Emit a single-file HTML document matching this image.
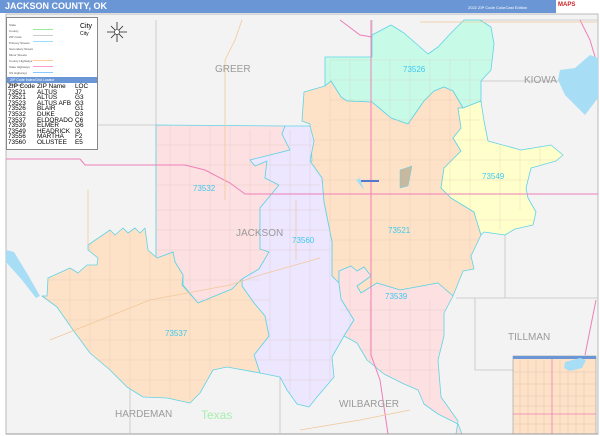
<!DOCTYPE html>
<html><head><meta charset="utf-8"><style>
html,body{margin:0;padding:0;width:600px;height:436px;overflow:hidden;background:#fff;font-family:"Liberation Sans",sans-serif}
#hdr{position:absolute;left:0;top:0;width:600px;height:13px;background:#6a96d6}
#hdr b{position:absolute;left:5px;top:1px;color:#fff;font-size:9px}
#hdr i{position:absolute;left:468px;top:5px;color:#fff;font-size:4px;font-style:normal}
#logo{position:absolute;left:556px;top:0;width:44px;height:13px;background:#fff}
svg{position:absolute;left:0;top:0}
#leg{position:absolute;left:6px;top:17px;width:92px;height:133px;background:#fff;border:1px solid #888;box-sizing:border-box;font-size:6.4px;line-height:5.6px;color:#000}
#leg .bar{position:absolute;left:0;top:59px;width:90px;height:6px;background:#6a96d6;color:#fff;font-size:3.5px;line-height:6px;padding-left:3px;box-sizing:border-box}
#leg .t{position:absolute;left:1px;top:66px}
#leg .t div{height:5.6px;line-height:6px;white-space:nowrap}
#leg .t span{display:inline-block;vertical-align:top}
.a{width:29px}.b{width:38px}
.lab{position:absolute;color:#9a9a9a;font-size:10px}
.zip{position:absolute;color:#3ec8ee;font-size:8px}
</style></head><body>
<svg width="600" height="436" viewBox="0 0 600 436">
<defs>
<clipPath id="zc">
<path d="M325 57 H372 V35 L391 25 L404 33 L428 54 L438 47 L451 33 L464 20 L480 20 L491 27 L494 44 L491 70 L481 81 L481 101 L484 121 L488 141 L521 150 L551 145 L563 155 L556 161 L531 168 L526 188 L528 198 L536 212 L533 225 L515 229 L505 235 L484 232 L481 235 L471 256 L474 269 L463 271 L453 296 L444 313 L444 336 L438 360 L441 397 L458 421 L456 434 L438 414 L424 404 L418 390 L404 384 L384 374 L367 360 L357 343 L344 336 L332 357 L334 377 L317 397 L309 407 L297 404 L287 390 L280 377 L260 373 L227 367 L213 370 L200 393 L190 403 L167 398 L143 397 L127 387 L110 370 L90 353 L73 330 L57 307 L42 296 L48 278 L70 268 L78 273 L87 265 L97 265 L98 258 L88 250 L88 245 L110 230 L115 235 L123 228 L128 233 L135 228 L140 233 L145 228 L148 250 L156 258 L156 125 L310 126 L302 121 L304 92 L325 86 Z"/>
</clipPath>
</defs>
<rect x="0" y="0" width="600" height="436" fill="#fff"/>
<rect x="6" y="14" width="592" height="420" fill="#f3f3f3" stroke="#bbb" stroke-width="1"/>
<g fill="none" stroke="#c4c4c4" stroke-width="0.8">
<path d="M6 125 H156 V296 M156 125 V20 M372 20 V57 M464 20 H598 M481 81 H598 M505 235 V298 H598 M456 298 H505 M475 298 V370 H513 M130 433 V365 H150 M280 433 V373"/>
</g>
<g stroke="#5fd3e6" stroke-width="0.8" stroke-linejoin="round">
<path fill="#c7fbe8" d="M325 57 H372 V35 L391 25 L404 33 L428 54 L438 47 L451 33 L464 20 L480 20 L491 27 L494 44 L491 70 L481 81 L481 101 L463 108 L453 91 L444 87 L434 91 L424 101 L408 124 L391 118 L372 102 L347 101 L341 97 L331 81 L325 86 Z"/>
<path fill="#fde2c7" d="M325 86 L331 81 L341 97 L347 101 L372 102 L391 118 L408 124 L424 101 L434 91 L444 87 L453 91 L463 108 L458 108 L461 128 L453 138 L461 151 L444 168 L441 188 L451 198 L474 212 L481 235 L471 256 L474 269 L463 271 L453 296 L438 283 L400 290 L377 283 L361 293 L357 286 L371 276 L364 267 L357 271 L351 266 L339 271 L339 283 L332 276 L332 242 L324 202 L322 178 L310 161 L312 161 L310 124 L302 121 L304 92 Z"/>
<path fill="#ffffcc" d="M463 108 L481 101 L484 121 L488 141 L521 150 L551 145 L563 155 L556 161 L531 168 L526 188 L528 198 L536 212 L533 225 L515 229 L505 235 L484 232 L481 235 L474 212 L451 198 L441 188 L444 168 L461 151 L453 138 L461 128 L458 108 Z"/>
<path fill="#fde0e2" d="M156 125 L285 126 L282 134 L290 150 L250 160 L255 166 L267 161 L265 178 L279 185 L260 208 L260 249 L269 252 L259 269 L242 279 L232 289 L198 303 L183 285 L183 275 L175 262 L173 252 L157 258 L156 261 Z"/>
<path fill="#ece6ff" d="M285 126 L310 126 L314 141 L310 161 L322 178 L324 202 L332 242 L332 276 L339 283 L341 299 L354 320 L344 336 L332 357 L334 377 L317 397 L309 407 L297 404 L287 390 L280 377 L260 373 L254 355 L269 336 L265 316 L254 303 L242 286 L242 279 L259 269 L269 252 L260 249 L260 208 L279 185 L265 178 L267 161 L255 166 L250 160 L290 150 L282 134 Z"/>
<path fill="#fde0e2" d="M339 283 L339 271 L351 266 L357 271 L364 267 L371 276 L357 286 L361 293 L377 283 L400 290 L438 283 L453 296 L444 313 L444 336 L438 360 L441 397 L458 421 L456 434 L462 434 L458 424 L438 414 L424 404 L418 390 L404 384 L384 374 L367 360 L357 343 L344 336 L354 320 L341 299 Z"/>
<path fill="#fde2c7" d="M48 278 L70 268 L78 273 L87 265 L97 265 L98 258 L88 250 L88 245 L110 230 L115 235 L123 228 L128 233 L135 228 L140 233 L145 228 L148 250 L157 258 L173 252 L175 262 L183 275 L182 285 L198 303 L232 289 L242 279 L242 286 L254 303 L265 316 L269 336 L254 355 L260 373 L227 367 L213 370 L200 393 L190 403 L167 398 L143 397 L127 387 L110 370 L90 353 L73 330 L57 307 L42 296 L47 296 Z"/>
</g>
<g stroke="#d9c0b0" stroke-width="0.4" opacity="0.7" clip-path="url(#zc)">
<path d="M170 125V300M190 125V300M210 125V300M230 125V290M250 130V280M270 130V360M290 130V400M310 130V400M330 60V380M350 60V340M390 60V290M410 60V280M430 60V280M450 60V270M470 60V270M500 120V230M520 120V210M540 140V210M70 260V330M90 240V350M110 230V370M130 230V390M150 230V395M170 300V398M190 300V400M210 300V370M230 295V370M370 300V390M390 300V380M410 300V390M430 300V400"/>
<path d="M156 145H320M156 165H320M156 185H320M156 210H320M156 230H330M156 250H330M40 280H260M40 300H270M50 320H270M70 340H350M90 360H350M120 380H340M310 140H560M310 160H560M320 180H540M330 220H540M330 240H480M330 260H470M340 310H445M350 330H445M350 350H440M380 370H440M330 60H500M330 80H500M330 100H500M330 120H480"/>
</g>
<g fill="none" stroke="#ee7fb8" stroke-width="1">
<path d="M6 159 H80 L85 165 H160 L185 165 L205 170 L230 183 L245 194 H598"/>
<path d="M371 20 V300 L371 355 L380 380 L388 434"/>
<path d="M340 20 L360 35 L372 37"/>
<path d="M580 20 L590 40 L596 60"/>
<path d="M596 300 L585 355"/>
</g>
<g fill="none" stroke="#f2c89a" stroke-width="0.8">
<path d="M50 340 L150 300 L230 285 L260 275 L320 258"/>
<path d="M242 20 L235 40 L225 60 V200 M88 190 V245 M296 200 V260"/>
<path d="M420 22 H598 M300 430 L330 425 L360 420 L410 410"/>
</g>
<g fill="#a8def5">
<path d="M6 250 L14 252 L28 275 L40 296 L36 298 L22 280 L6 262 Z"/>
<path d="M560 70 L575 68 L590 55 L598 58 L598 98 L585 115 L575 105 L565 95 L558 80 Z"/>
<path d="M356 180 L360 178 L364 190 Z"/>
</g>
<rect x="361" y="180" width="18" height="2" fill="#5577cc"/>
<path d="M400 170 L412 166 L408 186 L400 188 Z" fill="#c9b8a0" stroke="#5fd3e6" stroke-width="0.5"/>
<rect x="513" y="356" width="83" height="78" fill="#fde2c7" stroke="#999" stroke-width="0.6"/>
<rect x="513" y="356" width="83" height="3" fill="#6a96d6"/>
<path d="M565 362 L580 358 L586 360 L582 368 L570 371 L564 368 Z" fill="#a8def5"/>
<g stroke="#d9c0b0" stroke-width="0.4"><path d="M520 360V434M528 360V434M536 360V434M544 360V434M560 360V434M568 370V434M576 370V434M584 370V434M513 372H596M513 384H596M513 396H596M513 406H596M513 424H596"/></g>
<path d="M552 359V434M513 414H596" stroke="#ee7fb8" stroke-width="0.8"/>
<g stroke="#222" stroke-width="0.8"><path d="M117 22V42M107 32H127M111 26L123 38M123 26L111 38"/></g>
<circle cx="117" cy="32" r="2.5" fill="#fff" stroke="#222" stroke-width="0.6"/>
<path d="M6 434H598" stroke="#999" stroke-width="1"/>
</svg>
<div id="hdr"><b>JACKSON COUNTY, OK</b><i>2022 ZIP Code ColorCast Edition</i></div>
<div id="logo"><span style="position:absolute;left:2px;top:2px;color:#c22;font-size:6px;font-weight:bold">MAPS</span></div>
<div id="leg">
<div style="position:absolute;left:2px;top:4px;font-size:3px;line-height:6px;color:#555">State<br>County<br>ZIP Code<br>Primary Streets<br>Secondary Streets<br>Minor Streets<br>County Highways<br>State Highways<br>US Highways<br>Interstate Highways<br>Toll Roads</div>
<div style="position:absolute;left:26px;top:7px;width:20px;height:48px;background:linear-gradient(#fff 0 4px,#9e9 4px 5px,#fff 5px 10px,#ccc 10px 11px,#fff 11px 16px,#9df 16px 17px,#fff 17px 35px,#fc9 35px 36px,#fff 36px 41px,#f9c 41px 42px,#fff 42px 47px,#8cf 47px 48px)"></div>
<div style="position:absolute;left:73px;top:5px;font-size:7px;line-height:7px">City<br><span style="font-size:5px">City</span></div>
<div class="bar">ZIP Code Index/Grid Locator</div>
<div class="t">
<div><span class="a">ZIP Code</span><span class="b">ZIP Name</span>LOC</div>
<div><span class="a">73521</span><span class="b">ALTUS</span>J7</div>
<div><span class="a">73521</span><span class="b">ALTUS</span>G3</div>
<div><span class="a">73523</span><span class="b">ALTUS AFB</span>G3</div>
<div><span class="a">73526</span><span class="b">BLAIR</span>G1</div>
<div><span class="a">73532</span><span class="b">DUKE</span>D3</div>
<div><span class="a">73537</span><span class="b">ELDORADO</span>C6</div>
<div><span class="a">73539</span><span class="b">ELMER</span>G6</div>
<div><span class="a">73549</span><span class="b">HEADRICK</span>I3</div>
<div><span class="a">73556</span><span class="b">MARTHA</span>F2</div>
<div><span class="a">73560</span><span class="b">OLUSTEE</span>E5</div>
</div></div>
<div class="lab" style="left:215px;top:64px">GREER</div>
<div class="lab" style="left:524px;top:75px">KIOWA</div>
<div class="lab" style="left:236px;top:228px">JACKSON</div>
<div class="lab" style="left:508px;top:332px">TILLMAN</div>
<div class="lab" style="left:115px;top:409px">HARDEMAN</div>
<div class="lab" style="left:339px;top:399px">WILBARGER</div>
<div class="lab" style="left:201px;top:408px;color:#a8eeb0;font-size:12px">Texas</div>
<div class="zip" style="left:403px;top:65px">73526</div>
<div class="zip" style="left:193px;top:184px">73532</div>
<div class="zip" style="left:482px;top:172px">73549</div>
<div class="zip" style="left:388px;top:226px">73521</div>
<div class="zip" style="left:292px;top:236px">73560</div>
<div class="zip" style="left:385px;top:292px">73539</div>
<div class="zip" style="left:165px;top:329px">73537</div>
</body></html>
